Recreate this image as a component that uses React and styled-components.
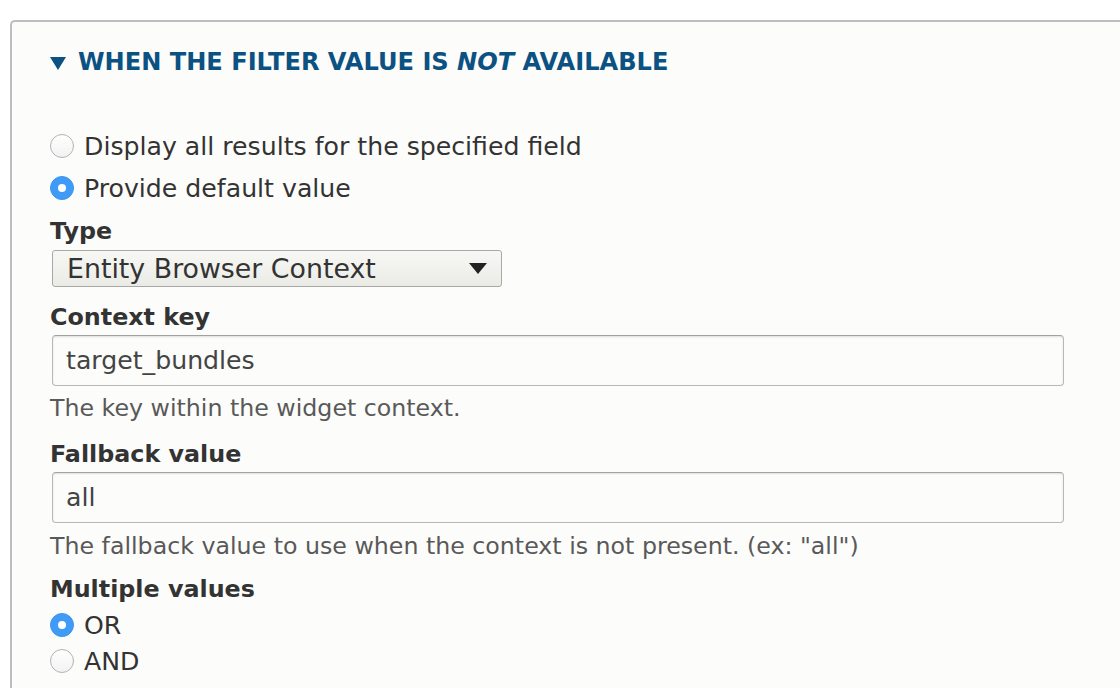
import styled, { createGlobalStyle } from "styled-components";

const Global = createGlobalStyle`
  html, body {
    margin: 0;
    padding: 0;
    background: #ffffff;
    overflow: hidden;
  }
  body {
    font-family: "DejaVu Sans", "Noto Sans", sans-serif;
    color: #333333;
  }
`;

const Page = styled.div`
  width: 1120px;
  height: 688px;
  overflow: hidden;
  padding: 20px 0 0 10px;
  box-sizing: border-box;
`;

const Fieldset = styled.div`
  width: 1140px;
  height: 800px;
  border: 2px solid #bebebe;
  border-right: none;
  border-bottom: none;
  border-radius: 5px 0 0 0;
  background: #fcfcfa;
  box-sizing: border-box;
  padding: 18px 0 0 38px;
`;

const Legend = styled.div`
  display: flex;
  align-items: center;
  gap: 12px;
  height: 44px;
  margin-bottom: 44px;
  font-size: 24.1px;
  font-weight: bold;
  color: #0b5182;
  text-transform: uppercase;

  em {
    font-style: italic;
  }
`;

const Triangle = styled.span`
  width: 0;
  height: 0;
  border-left: 8px solid transparent;
  border-right: 8px solid transparent;
  border-top: 13px solid #0b5182;
  margin-top: 2px;
`;

const RadioRow = styled.label`
  display: flex;
  align-items: center;
  gap: 10px;
  height: 36px;
  margin-top: ${(p) => p.$top || 0}px;
  font-size: 25.2px;
  color: #333;
  white-space: nowrap;
`;

const Radio = styled.span`
  width: 24px;
  height: 24px;
  border-radius: 50%;
  box-sizing: border-box;
  flex: none;
  display: flex;
  align-items: center;
  justify-content: center;
  border: 1px solid ${(p) => (p.$on ? "#3b95f0" : "#b3b3b3")};
  background: ${(p) =>
    p.$on ? "#3f9bf6" : "linear-gradient(#ffffff, #f2f2f2)"};

  &::after {
    content: "";
    display: ${(p) => (p.$on ? "block" : "none")};
    width: 8px;
    height: 8px;
    border-radius: 50%;
    background: #ffffff;
  }
`;

const Label = styled.div`
  font-size: 23.8px;
  font-weight: bold;
  line-height: 30px;
  height: 30px;
  margin-top: ${(p) => p.$top}px;
  color: #333;
  white-space: nowrap;
`;

const Select = styled.div`
  width: 450px;
  height: 37px;
  margin: 4px 0 0 2px;
  box-sizing: border-box;
  border: 1px solid #a8a8a8;
  border-radius: 3px;
  background: linear-gradient(#f7f7f4, #ebebe6);
  display: flex;
  align-items: center;
  justify-content: space-between;
  padding: 0 14px 0 14px;
  font-size: 26.8px;
  color: #333;
  white-space: nowrap;
`;

const Arrow = styled.span`
  width: 0;
  height: 0;
  border-left: 9px solid transparent;
  border-right: 9px solid transparent;
  border-top: 11px solid #222;
`;

const Input = styled.div`
  width: 1012px;
  height: 51px;
  margin: 3px 0 0 2px;
  box-sizing: border-box;
  border: 1px solid #b8b8b8;
  border-top-color: #a2a2a2;
  border-radius: 4px;
  background: #fcfcfa;
  box-shadow: inset 0 1px 2px rgba(0, 0, 0, 0.12);
  display: flex;
  align-items: center;
  padding-left: 13px;
  font-size: 25.2px;
  color: #444;
`;

const Description = styled.div`
  font-size: 23.7px;
  line-height: 30px;
  height: 30px;
  margin-top: ${(p) => p.$top}px;
  color: #595959;
  white-space: nowrap;
`;

export default function App() {
  return (
    <>
      <Global />
      <Page>
        <Fieldset>
          <Legend>
            <Triangle />
            <span>
              When the filter value is <em>not</em> available
            </span>
          </Legend>

          <RadioRow>
            <Radio />
            Display all results for the specified field
          </RadioRow>
          <RadioRow $top={6}>
            <Radio $on />
            Provide default value
          </RadioRow>

          <Label $top={10}>Type</Label>
          <Select>
            Entity Browser Context
            <Arrow />
          </Select>

          <Label $top={15}>Context key</Label>
          <Input>target_bundles</Input>
          <Description $top={7}>The key within the widget context.</Description>

          <Label $top={16}>Fallback value</Label>
          <Input>all</Input>
          <Description $top={8}>
            The fallback value to use when the context is not present. (ex: "all")
          </Description>

          <Label $top={13}>Multiple values</Label>
          <RadioRow $top={3}>
            <Radio $on />
            OR
          </RadioRow>
          <RadioRow>
            <Radio />
            AND
          </RadioRow>
          <Description $top={4}>
            Conjunction to use when handling multiple values. NOTE: for multiple values to work make sure the bottom
          </Description>
        </Fieldset>
      </Page>
    </>
  );
}
